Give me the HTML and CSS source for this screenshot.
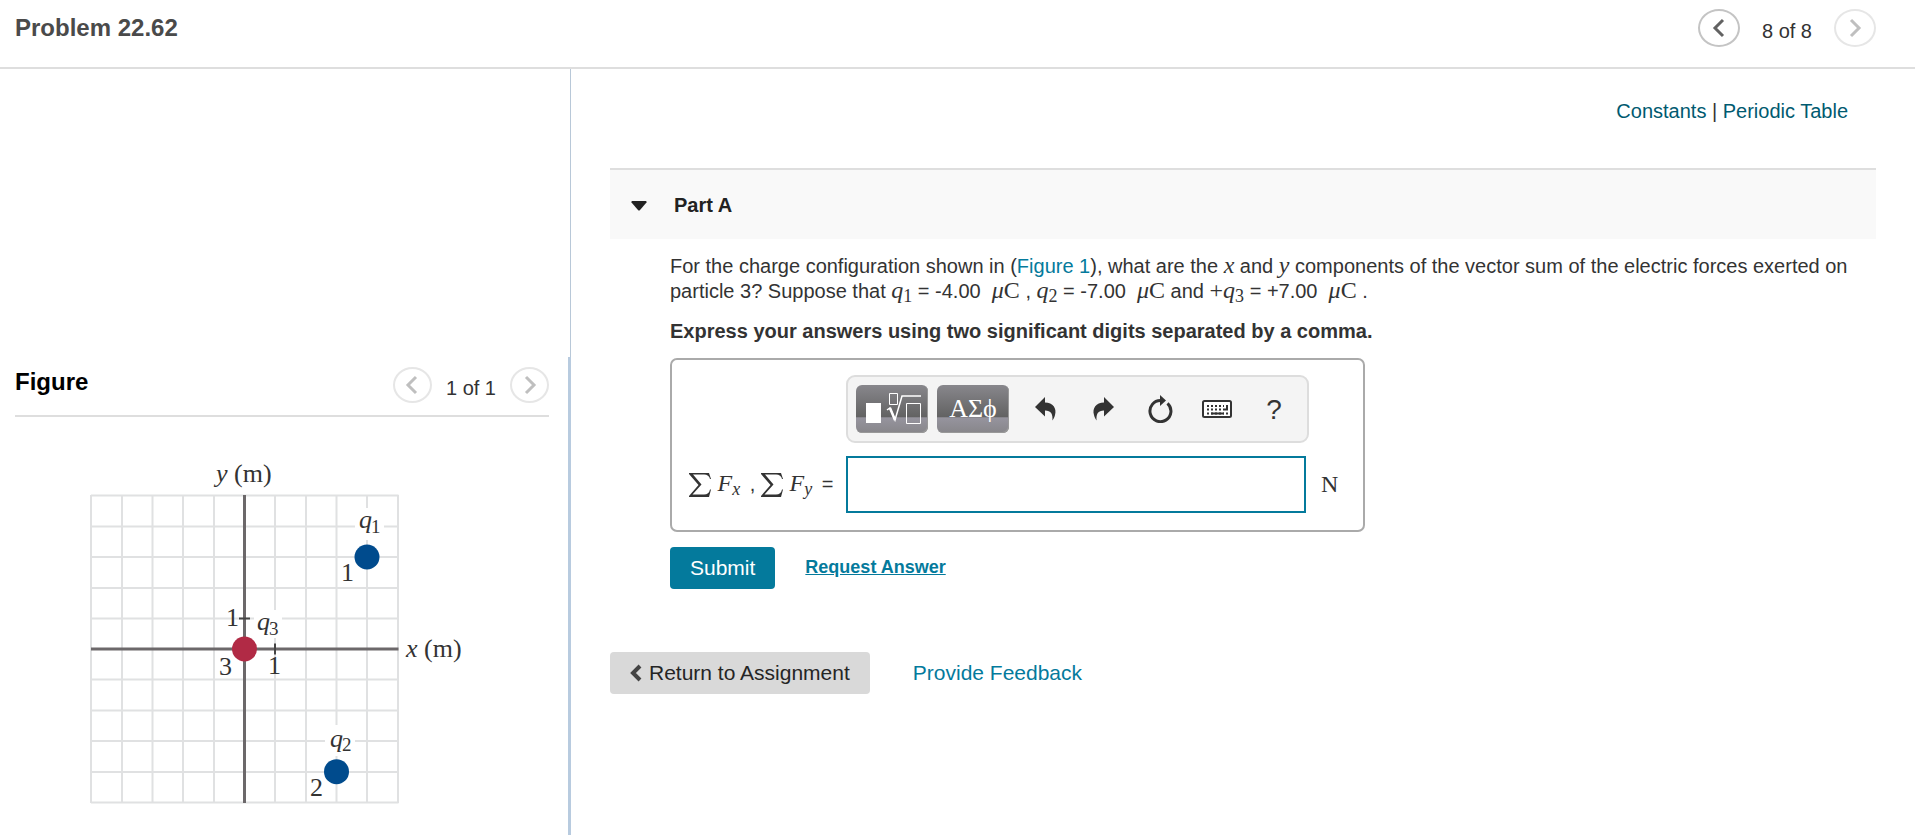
FILE: index.html
```html
<!DOCTYPE html>
<html lang="en">
<head>
<meta charset="utf-8">
<title>Problem 22.62</title>
<link rel="stylesheet" href="styles.css">
</head>
<body>
<header class="top">
  <h1 class="top-title">Problem 22.62</h1>
  <nav class="pager pager-top" aria-label="Problems">
    <button class="circle circle-active" type="button" aria-label="Previous problem"><svg width="14" height="20" viewBox="0 0 14 20"><path d="M11 2 3 10l8 8"/></svg></button>
    <span class="pager-text">8 of 8</span>
    <button class="circle" type="button" aria-label="Next problem" disabled><svg width="14" height="20" viewBox="0 0 14 20"><path d="m3 2 8 8-8 8"/></svg></button>
  </nav>
</header>
<div class="columns">
  <aside class="side">
    <div class="side-top"></div>
    <section class="figure-pane">
      <div class="figure-head">
        <h2 class="figure-title">Figure</h2>
        <nav class="pager pager-figure" aria-label="Figures">
          <button class="circle" type="button" aria-label="Previous figure" disabled><svg width="14" height="20" viewBox="0 0 14 20"><path d="m11 2-8 8 8 8"/></svg></button>
          <span class="pager-text">1 of 1</span>
          <button class="circle" type="button" aria-label="Next figure" disabled><svg width="14" height="20" viewBox="0 0 14 20"><path d="m3 2 8 8-8 8"/></svg></button>
        </nav>
      </div>
      <svg class="plot" width="400" height="360" viewBox="80 450 400 360" role="img" aria-label="Charge configuration">
        <path class="grid" d="M91 495.500h307.500M91 526.500h307.500M91 557h307.500M91 588h307.500M91 618.500h307.500M91 679.500h307.500M91 710.500h307.500M91 741h307.500M91 772h307.500M91 802.500h307.500M91 495v308M122 495v308M152.500 495v308M183 495v308M214 495v308M275 495v308M306 495v308M336.500 495v308M367 495v308M398 495v308"/>
        <path class="mask" d="M355 508h29v32h-29zM254 610h28v28h-28zM325 725h30v31h-30z"/>
        <path class="axis" d="M244.500 495v308M91 649h307.500"/>
        <path class="tick" d="M239 618.500h11M275 643.500v11"/>
        <circle class="blue" cx="367" cy="557" r="12.500"/>
        <circle class="blue" cx="336.500" cy="771.700" r="12.500"/>
        <circle class="red" cx="244.500" cy="649" r="12.500"/>
        <g class="plot-text">
          <text x="216" y="482"><tspan class="it">y</tspan> (m)</text>
          <text x="406" y="657"><tspan class="it">x</tspan> (m)</text>
          <text x="359" y="528" class="it">q</text><text x="371" y="533" class="sub">1</text>
          <text x="257" y="630" class="it">q</text><text x="269" y="635" class="sub">3</text>
          <text x="330" y="747" class="it">q</text><text x="342" y="751" class="sub">2</text>
          <text x="341" y="581">1</text>
          <text x="226" y="626">1</text>
          <text x="268" y="674">1</text>
          <text x="219" y="675">3</text>
          <text x="310" y="796">2</text>
        </g>
      </svg>
    </section>
  </aside>
  <main class="main">
    <div class="refs"><a href="#constants">Constants</a> | <a href="#table">Periodic Table</a></div>
    <section class="part">
      <h2 class="part-head"><svg width="16" height="10" viewBox="0 0 16 10"><path d="M1 0h14q1 .5.500 1.500L9 9q-1 1-2 0L.5 1.500Q0 .5 1 0z"/></svg>Part A</h2>
      <div class="part-body">
        <p class="question">For the charge configuration shown in (<a href="#figure">Figure 1</a>), what are the <i class="math">x</i> and <i class="math">y</i> components of the vector sum of the electric forces exerted on particle 3? Suppose that <span class="math"><i>q</i><sub>1</sub></span> = -4.00 &nbsp;<span class="math"><i>μ</i>C</span> , <span class="math"><i>q</i><sub>2</sub></span> = -7.00 &nbsp;<span class="math"><i>μ</i>C</span> and <span class="math">+<i>q</i><sub>3</sub></span> = +7.00 &nbsp;<span class="math"><i>μ</i>C</span> .</p>
        <p class="instruction">Express your answers using two significant digits separated by a comma.</p>
        <form class="answer">
          <div class="toolbar">
            <div class="tool-group">
              <button class="tool-key" type="button" aria-label="Templates"><svg width="72" height="48" viewBox="0 0 72 48"><path d="M10 18h15v20H10z" fill="#fff"/><path d="M33.500 8.500h8v11h-8zM50.500 18.500h14v20h-14z" fill="none" stroke="#fff"/><path d="m31 25 3-2 5 12 7-24h19" fill="none" stroke="#fff" stroke-width="1.500"/><path d="m34 23 5 12" stroke="#fff" stroke-width="2.500"/></svg></button>
              <button class="tool-key" type="button" aria-label="Symbols">ΑΣϕ</button>
            </div>
            <div class="tool-group">
              <button class="tool" type="button" aria-label="Undo"><svg width="22" height="24" viewBox="0 0 22 24"><path d="M0 10 10 0v5.500c8 0 12 6 10 12.500-.4 2-1.500 4-2.600 5.500C18 17 16 13.500 10 13.500v6z"/></svg></button>
              <button class="tool" type="button" aria-label="Redo"><svg width="22" height="24" viewBox="0 0 22 24"><path d="M22 10 12 0v5.500C4 5.500 0 11.500 2 18c.4 2 1.500 4 2.600 5.500C4 17 6 13.500 12 13.500v6z"/></svg></button>
              <button class="tool" type="button" aria-label="Reset"><svg width="26" height="28" viewBox="0 0 26 28"><path d="M20.500 8.300A10.500 10.500 0 1 1 14 5.600" fill="none" stroke="#333" stroke-width="3"/><path d="m13 0 6 5.500-6 5.500z"/></svg></button>
              <button class="tool" type="button" aria-label="Keyboard shortcuts"><svg width="30" height="20" viewBox="0 0 30 20"><rect x="1" y="2" width="28" height="16" rx="1.500" fill="#fff" stroke="#333" stroke-width="2"/><path d="M5 7h17M5 10.500h15M5 14.500h2M9 14.500h13M24 14.500h2" fill="none" stroke="#333" stroke-width="2" stroke-dasharray="2 2"/><path d="M9 14.500h13M21 10.500h4V6" fill="none" stroke="#333" stroke-width="2"/></svg></button>
              <button class="tool tool-help" type="button" aria-label="Help">?</button>
            </div>
          </div>
          <label class="answer-label" for="force"><svg width="23" height="24" viewBox="0 0 23 24"><path d="M0 0h20l2 6h-1q-1-4.500-6-4.500H4l8.500 10L3.500 21.500H15q5 0 6-5h1L20 24H0v-1l9.500-11L0 1z"/></svg> <span class="math"><i>F</i><sub><i>x</i></sub></span> , <svg width="23" height="24" viewBox="0 0 23 24"><path d="M0 0h20l2 6h-1q-1-4.500-6-4.500H4l8.500 10L3.500 21.500H15q5 0 6-5h1L20 24H0v-1l9.500-11L0 1z"/></svg> <span class="math"><i>F</i><sub><i>y</i></sub></span> =</label>
          <input class="answer-input" id="force" type="text">
          <span class="unit">N</span>
        </form>
        <div class="actions">
          <button class="submit" type="button">Submit</button>
          <a class="request" href="#answer">Request Answer</a>
        </div>
      </div>
    </section>
    <div class="footer">
      <a class="return" href="#assignment"><svg width="12" height="18" viewBox="0 0 12 18"><path d="M10 2 3 9l7 7"/></svg>Return to Assignment</a>
      <a class="feedback" href="#feedback">Provide Feedback</a>
    </div>
  </main>
</div>
</body>
</html>
```
FILE: styles.css
```css
* { box-sizing: border-box; }
body {
  margin: 0;
  min-height: 100vh;
  display: flex;
  flex-direction: column;
  background: #fff;
  color: #333;
  font: 20px/25px "Liberation Sans", Arial, sans-serif;
}
h1, h2, p { margin: 0; }
a { color: #047a9c; text-decoration: none; }
button { font: inherit; padding: 0; border: 0; background: none; cursor: pointer; }
sub { font-size: 18px; line-height: 12px; vertical-align: -4px; }

.top {
  display: flex;
  justify-content: space-between;
  align-items: flex-start;
  padding: 9px 39px 20px 15px;
  border-bottom: 2px solid #dedede;
}
.top-title { font-size: 24px; line-height: 38px; color: #4a4a4a; }
.pager { display: flex; align-items: center; }
.pager-top { gap: 22px; }
.pager-figure { gap: 14px; }
.pager-text { padding-top: 6px; }
.circle {
  display: grid;
  place-items: center;
  width: 42px;
  height: 38px;
  border: 2px solid #e6e6e6;
  border-radius: 50%;
}
.pager-figure .circle { width: 39px; height: 36px; }
.circle svg { fill: none; stroke: #bfbfbf; stroke-width: 3; }
.circle-active { border-color: #c4c4c4; }
.circle-active svg { stroke: #626262; }

.columns { display: flex; flex: 1; }
.side { display: flex; flex-direction: column; flex: 0 0 571px; }
.side-top { min-height: 288px; border-right: 1px solid #b8c8d8; }
.figure-pane {
  flex: 1;
  padding: 10px 19px 0 15px;
  border-right: 3px solid #b8cbdf;
}
.figure-head {
  display: flex;
  justify-content: space-between;
  padding-bottom: 12px;
  border-bottom: 2px solid #dedede;
}
.figure-title { font-size: 24px; line-height: 30px; color: #000; }
.plot { display: block; margin: 33px 0 0 65px; }
.grid { fill: none; stroke: #e0e1e2; stroke-width: 2; }
.mask { fill: #fff; }
.axis { fill: none; stroke: #6c686a; stroke-width: 3; }
.tick { fill: none; stroke: #444; stroke-width: 2; }
.blue { fill: #004b8d; }
.red { fill: #b12a45; }
.plot-text { font: 26px "Liberation Serif", "Times New Roman", serif; fill: #333; }
.it { font-style: italic; }
.sub { font-size: 19px; }

.main { flex: 1; min-width: 0; padding: 30px 39px 40px 39px; }
.refs { padding-right: 28px; text-align: right; }
.refs a { color: #005a70; }
.part { margin-top: 44px; }
.part-head {
  display: flex;
  align-items: center;
  gap: 27px;
  padding: 23px 21px 21px;
  border-top: 2px solid #dedede;
  background: #f9f9f9;
  color: #222;
  fill: #222;
  font-size: 20px;
  line-height: 25px;
}
.part-body { padding: 15px 10px 0 60px; }
.math { font-family: "Liberation Serif", "Times New Roman", serif; font-size: 24px; line-height: 18px; }
.instruction { margin-top: 15px; font-weight: bold; }
.answer {
  display: grid;
  grid-template-columns: 142px 460px 17px;
  column-gap: 15px;
  row-gap: 13px;
  align-items: center;
  width: fit-content;
  margin-top: 14px;
  padding: 15px 25px 17px 17px;
  border: 2px solid #aaa;
  border-radius: 7px;
}
.toolbar {
  grid-column: 2 / 4;
  justify-self: start;
  display: flex;
  align-items: center;
  gap: 13px;
  width: 463px;
  height: 68px;
  padding: 0 8px;
  border: 2px solid #ddd;
  border-radius: 9px;
  background: #f4f4f4;
}
.tool-group { display: flex; gap: 9px; }
.tool-key {
  width: 72px;
  height: 48px;
  border-radius: 6px;
  background: linear-gradient(#88878c 0, #626262 67%, #96949e 68%, #87868a 100%);
  box-shadow: inset -1px -1px #999;
  color: #fff;
  font: 26px/42px "Liberation Serif", "Times New Roman", serif;
}
.tool-key svg { display: block; }
.tool { display: grid; place-items: center; width: 48px; height: 48px; fill: #333; color: #333; }
.tool-help { font-size: 28px; }
.answer-label { white-space: nowrap; }
.answer-label svg { vertical-align: -6px; fill: #333; }
.answer-label .math { margin-right: 4px; }
.answer-input {
  width: 100%;
  height: 57px;
  padding: 0 10px;
  border: 2px solid #047a9c;
  border-radius: 0;
  font: inherit;
  outline: 0;
}
.unit { font: 24px/25px "Liberation Serif", "Times New Roman", serif; }
.actions { display: flex; gap: 30px; margin-top: 15px; }
.submit {
  height: 42px;
  padding: 0 20px;
  border-radius: 4px;
  background: #047a9c;
  color: #fff;
  font-size: 21px;
  line-height: 40px;
}
.request { font-size: 18px; font-weight: bold; line-height: 40px; text-decoration: underline; }
.footer { display: flex; gap: 43px; margin-top: 63px; font-size: 21px; line-height: 42px; }
.return {
  display: flex;
  align-items: center;
  gap: 7px;
  padding: 0 20px;
  border-radius: 4px;
  background: #d9d9d9;
  color: #252525;
}
.return svg { fill: none; stroke: #444; stroke-width: 4; }
```
